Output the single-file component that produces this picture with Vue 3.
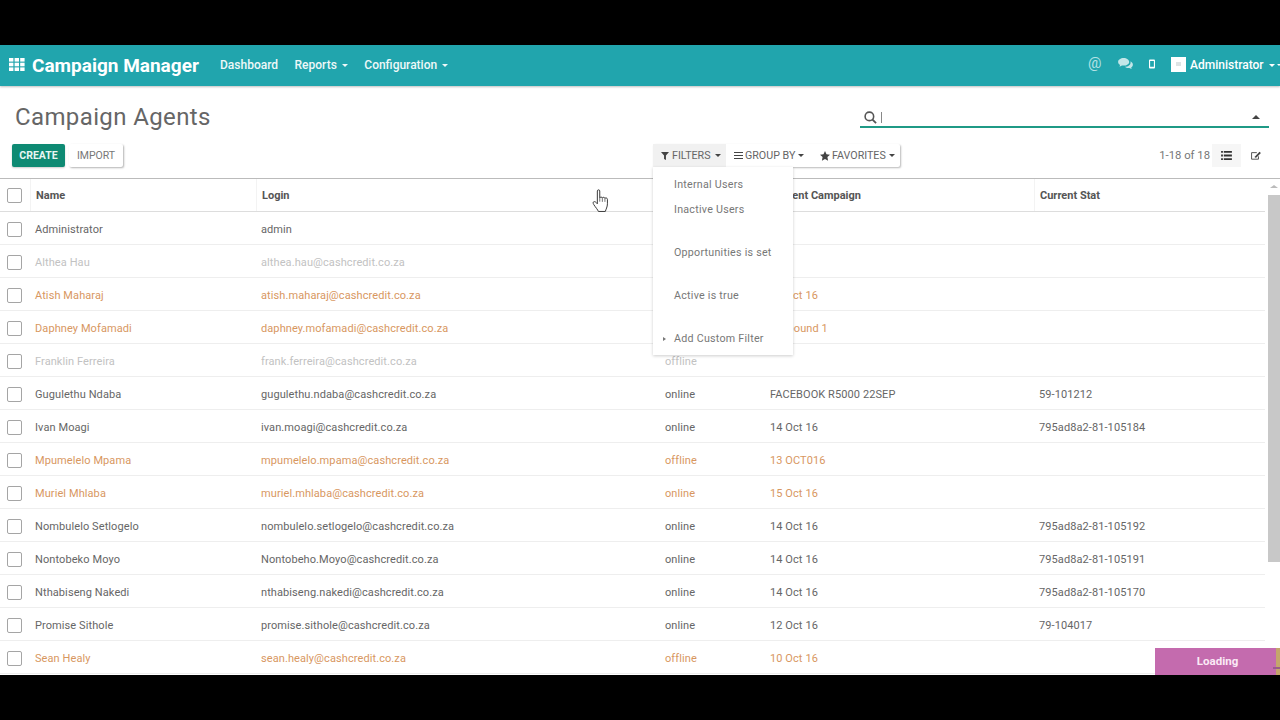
<script setup>
const rows = [
  { n: 'Administrator', l: 'admin', s: '', c: '', t: '', k: '' },
  { n: 'Althea Hau', l: 'althea.hau@cashcredit.co.za', s: '', c: '', t: '', k: 'muted' },
  { n: 'Atish Maharaj', l: 'atish.maharaj@cashcredit.co.za', s: 'offline', c: '14 Oct 16', t: '', k: 'warn' },
  { n: 'Daphney Mofamadi', l: 'daphney.mofamadi@cashcredit.co.za', s: 'offline', c: 'Outbound 1', t: '', k: 'warn' },
  { n: 'Franklin Ferreira', l: 'frank.ferreira@cashcredit.co.za', s: 'offline', c: '', t: '', k: 'muted' },
  { n: 'Gugulethu Ndaba', l: 'gugulethu.ndaba@cashcredit.co.za', s: 'online', c: 'FACEBOOK R5000 22SEP', t: '59-101212', k: '' },
  { n: 'Ivan Moagi', l: 'ivan.moagi@cashcredit.co.za', s: 'online', c: '14 Oct 16', t: '795ad8a2-81-105184', k: '' },
  { n: 'Mpumelelo Mpama', l: 'mpumelelo.mpama@cashcredit.co.za', s: 'offline', c: '13 OCT016', t: '', k: 'warn' },
  { n: 'Muriel Mhlaba', l: 'muriel.mhlaba@cashcredit.co.za', s: 'online', c: '15 Oct 16', t: '', k: 'warn' },
  { n: 'Nombulelo Setlogelo', l: 'nombulelo.setlogelo@cashcredit.co.za', s: 'online', c: '14 Oct 16', t: '795ad8a2-81-105192', k: '' },
  { n: 'Nontobeko Moyo', l: 'Nontobeho.Moyo@cashcredit.co.za', s: 'online', c: '14 Oct 16', t: '795ad8a2-81-105191', k: '' },
  { n: 'Nthabiseng Nakedi', l: 'nthabiseng.nakedi@cashcredit.co.za', s: 'online', c: '14 Oct 16', t: '795ad8a2-81-105170', k: '' },
  { n: 'Promise Sithole', l: 'promise.sithole@cashcredit.co.za', s: 'online', c: '12 Oct 16', t: '79-104017', k: '' },
  { n: 'Sean Healy', l: 'sean.healy@cashcredit.co.za', s: 'offline', c: '10 Oct 16', t: '', k: 'warn' }
]
</script>

<template>
  <div class="screen">
    <div class="letterbox top"></div>
    <div class="app">
      <header class="navbar">
        <svg class="apps" viewBox="0 0 16 13" width="16" height="13"><g fill="#fff"><rect x="0" y="0" width="4.4" height="3.6"/><rect x="5.6" y="0" width="4.4" height="3.6"/><rect x="11.2" y="0" width="4.4" height="3.6"/><rect x="0" y="4.7" width="4.4" height="3.6"/><rect x="5.6" y="4.7" width="4.4" height="3.6"/><rect x="11.2" y="4.7" width="4.4" height="3.6"/><rect x="0" y="9.4" width="4.4" height="3.6"/><rect x="5.6" y="9.4" width="4.4" height="3.6"/><rect x="11.2" y="9.4" width="4.4" height="3.6"/></g></svg>
        <span class="brand">Campaign Manager</span>
        <nav class="menu">
          <span>Dashboard</span>
          <span>Reports <i class="caret"></i></span>
          <span>Configuration <i class="caret"></i></span>
        </nav>
        <div class="systray">
          <span class="at">@</span>
          <svg viewBox="0 0 16 13" width="15" height="12"><path fill="#c3e6e8" d="M6 0C2.7 0 0 1.9 0 4.2c0 1.3.9 2.5 2.2 3.2L1.5 9.4l2.7-1.4c.6.1 1.2.2 1.8.2 3.3 0 6-1.8 6-4S9.300 0 6 0z"/><path fill="#c3e6e8" d="M13.300 3.600c.2.400.2.800.2 1.200 0 2.700-2.800 4.700-6.200 4.800 1 .9 2.300 1.300 3.700 1.300.4 0 .8 0 1.200-.1L14.600 12l-.4-1.900c1.100-.7 1.800-1.700 1.800-2.900 0-1.500-1.100-2.800-2.700-3.600z"/></svg>
          <svg viewBox="0 0 8 12" width="6" height="10"><path fill="#fff" fill-rule="evenodd" d="M1.200 0h5.600C7.500 0 8 .5 8 1.200v9.600c0 .7-.5 1.200-1.200 1.200H1.200C.5 12 0 11.500 0 10.800V1.200C0 .5.5 0 1.200 0zM1.500 2v7.500h5V2z"/></svg>
          <span class="user"><span class="avatar"><i></i></span><span class="uname">Administrator</span> <i class="caret"></i><i class="caret tiny"></i></span>
        </div>
      </header>

      <section class="control">
        <div class="left">
          <h1>Campaign Agents</h1>
          <div class="buttons">
            <button class="create">CREATE</button>
            <button class="import">IMPORT</button>
          </div>
        </div>
        <div class="right">
          <div class="search">
            <svg viewBox="0 0 14 14" width="13" height="13"><circle cx="5.800" cy="5.800" r="4.600" fill="none" stroke="#555" stroke-width="1.700"/><path d="M9.200 9.200L13 13" stroke="#555" stroke-width="2"/></svg>
            <span class="cursor"></span>
            <i class="caret up"></i>
          </div>
          <div class="tools">
            <div class="filters">
              <span class="fbtn open">
                <svg viewBox="0 0 10 10" width="8" height="8"><path fill="#444" d="M0 0h10L6.200 4.500V10L3.800 8.600V4.500z"/></svg>FILTERS <i class="caret dark"></i>
              </span>
              <span class="fbtn">
                <svg viewBox="0 0 10 10" width="9" height="9"><path fill="#444" d="M0 1h10v1.200H0zM0 4.400h10v1.200H0zM0 7.800h10V9H0z"/></svg>GROUP BY <i class="caret dark"></i>
              </span>
              <span class="fbtn">
                <svg viewBox="0 0 10 10" width="10" height="10"><path fill="#444" d="M5 0l1.500 3.300 3.500.4-2.600 2.400.7 3.600L5 7.900 1.900 9.700l.7-3.600L0 3.700l3.500-.4z"/></svg>FAVORITES <i class="caret dark"></i>
              </span>
              <div class="dropdown">
                <div class="item first">Internal Users</div>
                <div class="item">Inactive Users</div>
                <div class="sep"></div>
                <div class="item">Opportunities is set</div>
                <div class="sep"></div>
                <div class="item">Active is true</div>
                <div class="sep"></div>
                <div class="item custom"><i class="tri"></i>Add Custom Filter</div>
              </div>
            </div>
            <div class="pager">
              <span>1-18 of 18</span>
              <span class="view active">
                <svg viewBox="0 0 12 10" width="11" height="9"><path fill="#333" d="M0 0h2v2H0zM3 0h9v2H3zM0 4h2v2H0zM3 4h9v2H3zM0 8h2v2H0zM3 8h9v2H3z"/></svg>
              </span>
              <span class="view">
                <svg viewBox="0 0 12 11" width="10" height="9"><path fill="none" stroke="#444" stroke-width="1.100" d="M9 6.500V10H.6V2H7"/><path fill="#444" d="M5 6.300L10.300.8 12 2.300 6.500 7.800l-2 .4z"/></svg>
              </span>
            </div>
          </div>
        </div>
      </section>

      <section class="table">
        <div class="row head">
          <span class="check"><i class="box"></i></span>
          <span class="cell bordered">Name</span>
          <span class="cell bordered">Login</span>
          <span class="cell"></span>
          <span class="cell bordered">Current Campaign</span>
          <span class="cell bordered">Current Stat</span>
        </div>
        <div v-for="r in rows" :key="r.n" class="row" :class="r.k">
          <span class="check"><i class="box"></i></span>
          <span class="cell">{{ r.n }}</span>
          <span class="cell">{{ r.l }}</span>
          <span class="cell">{{ r.s }}</span>
          <span class="cell">{{ r.c }}</span>
          <span class="cell">{{ r.t }}</span>
        </div>
        <div class="scrollbar">
          <i class="sb-up"></i>
          <i class="thumb"></i>
        </div>
      </section>

      <svg class="pointer" viewBox="0 0 18 25" width="18" height="24">
        <path fill="#fff" stroke="#333" stroke-width="1" stroke-linejoin="round" d="M5.200 2c0-1.500 2.500-1.500 2.500 0V9.200c.3-1.100 2.500-1.100 2.700.2.300-1.100 2.500-1 2.700.4.400-.9 2.500-.7 2.600.9v4.700c0 3.300-1.600 5.800-2.200 8H6.300c-.7-1.900-2.900-4.200-4.900-7.300-.9-1.500-.7-2.600.2-2.900 1-.3 2.300.5 3.600 2.200z"/>
        <path fill="none" stroke="#333" stroke-width=".7" d="M7.700 9.200v4M10.400 9.400v4M13.100 9.800v3.600"/>
      </svg>

      <div class="loading">Loading<i class="tab"></i><i class="mark"></i></div>
    </div>
    <div class="letterbox bottom"></div>
  </div>
</template>

<style scoped>
.screen { width: 1280px; height: 720px; display: flex; flex-direction: column; background: #000; overflow: hidden; font-family: Roboto, "Liberation Sans", sans-serif; }
.letterbox.top { height: 45px; flex: none; }
.letterbox.bottom { height: 45px; flex: none; }
.app { position: relative; height: 630px; flex: none; background: #fff; overflow: hidden; display: flex; flex-direction: column; }

.navbar { height: 41px; flex: none; background: #21a5ad; box-shadow: 0 1px 2px rgba(0,0,0,.25); display: flex; align-items: center; padding-left: 9px; color: #fff; position: relative; z-index: 2; }
.apps { margin-right: 7px; margin-top: -2px; }
.brand { font-size: 19px; font-weight: 700; width: 188px; white-space: nowrap; }
.menu { display: flex; gap: 16.500px; font-size: 12px; font-weight: 500; color: #eef8f8; margin-top: -2px; }
.caret { display: inline-block; width: 0; height: 0; border-left: 3px solid transparent; border-right: 3px solid transparent; border-top: 3px solid currentColor; vertical-align: middle; margin-left: 2px; }
.caret.up { border-top: 0; border-bottom: 4px solid #444; border-left-width: 4px; border-right-width: 4px; margin-left: auto; margin-right: 9px; }
.caret.dark { border-top-color: #444; }
.systray { margin-left: auto; display: flex; align-items: center; gap: 16px; margin-top: -3px; }
.at { font-size: 15px; color: #b5e2e5; width: 14px; margin-top: -2px; }
.user { display: flex; align-items: center; font-size: 12px; font-weight: 500; white-space: nowrap; width: 109px; overflow: hidden; }
.uname { margin-top: 2px; }
.avatar { width: 15px; height: 15px; background: #fff; margin-right: 4px; flex: none; display: flex; align-items: center; justify-content: center; }
.avatar i { width: 5px; height: 4px; background: #dde3e4; }
.user .caret { margin-left: 5px; margin-top: 2px; }
.user .caret.tiny { margin-left: 2px; border-left-width: 2px; border-right-width: 2px; border-top-width: 2px; }

.control { display: flex; height: 92px; flex: none; }
.left { width: 653px; flex: none; padding-left: 12px; box-sizing: border-box; }
h1 { margin: 17px 0 0 3px; font-size: 24px; line-height: 28px; font-weight: 400; color: #666; letter-spacing: .38px; }
.buttons { display: flex; gap: 1px; margin-top: 13px; }
button { font-family: inherit; font-size: 10.500px; border: 0; height: 23px; border-radius: 2px; padding: 0; }
.create { width: 53px; background: #0e8a73; color: #e8f6f2; font-weight: 700; box-shadow: 0 1px 2px rgba(0,0,0,.2); }
.import { width: 54px; margin-left: 3px; background: #fff; color: #777; box-shadow: 1px 1px 2px rgba(0,0,0,.3); }

.right { flex: 1; display: flex; flex-direction: column; }
.search { width: 409px; height: 22px; margin-left: 207px; margin-top: 20px; border-bottom: 2px solid #1f9a86; display: flex; align-items: center; padding: 2px 0 0 4px; box-sizing: border-box; }
.cursor { width: 1px; height: 11px; background: #888; margin-left: 4px; }
.tools { display: flex; margin-top: 14px; height: 25px; align-items: flex-start; padding-top: 2px; width: 612px; }
.filters { position: relative; display: flex; height: 23px; width: 247px; background: #fff; border-radius: 2px; box-shadow: 1px 1px 2px rgba(0,0,0,.28); font-size: 10.700px; color: #666; align-items: center; }
.fbtn { height: 23px; display: flex; align-items: center; gap: 2px; padding: 0 8px; box-sizing: border-box; white-space: nowrap; flex: none; }
.fbtn svg { flex: none; }
.fbtn .caret { margin-left: 1px; }
.fbtn.open { width: 73px; background: #f1f1f1; padding-left: 8px; gap: 3px; }
.fbtn:nth-child(2) { width: 85px; }
.fbtn:nth-child(3) { padding-left: 9px; gap: 2px; }
.dropdown { position: absolute; left: 0; top: 23px; width: 140px; height: 188px; background: #fff; box-shadow: 0 1px 3px rgba(0,0,0,.2); z-index: 5; font-size: 10.700px; color: #777; letter-spacing: .25px; }
.item { height: 24.500px; line-height: 24.500px; padding-left: 21px; position: relative; white-space: nowrap; }
.item.first { margin-top: 6px; }
.sep { height: 18.500px; }
.tri { position: absolute; left: 10px; top: 10px; width: 0; height: 0; border-left: 3px solid #777; border-top: 2.500px solid transparent; border-bottom: 2.500px solid transparent; }
.pager { margin-left: auto; display: flex; align-items: center; font-size: 11.300px; color: #777; height: 23px; margin-right: -5px; }
.view { width: 29px; height: 23px; display: flex; align-items: center; justify-content: center; }
.view.active { background: #f6f6f6; margin-left: 2px; }

.table { position: relative; border-top: 1px solid #bbb; flex: none; }
.row { display: grid; grid-template-columns: 30px 226px 404px 105px 269px 231px; grid-template-rows: 32px; height: 33px; width: 1265px; border-bottom: 1px solid #eee; box-sizing: border-box; font-size: 11px; color: #666; letter-spacing: .09px; }
.row.head { border-bottom: 1px solid #ddd; font-weight: 700; color: #555; letter-spacing: 0; }
.row.muted { color: #c2c2c2; }
.row.warn { color: #d8975f; }
.check { display: flex; align-items: center; justify-content: center; padding-top: 2px; box-sizing: border-box; }
.head .check { padding-top: 1px; }
.box { width: 15px; height: 15px; border: 1px solid #a5a5a5; border-radius: 2px; box-sizing: border-box; margin-right: 1px; }
.cell { padding-left: 5px; white-space: nowrap; line-height: 36px; box-sizing: border-box; overflow: hidden; }
.head .cell { line-height: 34px; }
.bordered { border-left: 1px solid #f3f3f3; }
.scrollbar { position: absolute; right: 0; top: 0; width: 12px; height: 497px; }
.sb-up { position: absolute; left: 2px; top: 6px; width: 0; height: 0; border-left: 4px solid transparent; border-right: 4px solid transparent; border-bottom: 3px solid #bbb; }
.thumb { position: absolute; left: 0; top: 16px; width: 12px; height: 367px; background: #c8c8c8; }

.pointer { position: absolute; left: 592px; top: 144px; z-index: 6; }
.loading { position: absolute; right: 0; bottom: 0; width: 125px; height: 27px; background: #c46bae; color: #fbe9f6; font-size: 11.500px; font-weight: 700; line-height: 27px; text-align: center; box-sizing: border-box; z-index: 4; }
.tab { position: absolute; right: 0; top: 0; width: 4px; height: 27px; background: #c4a56b; }
.mark { position: absolute; right: 0; top: 19px; width: 7px; height: 2px; background: #9a5a8c; }
</style>
